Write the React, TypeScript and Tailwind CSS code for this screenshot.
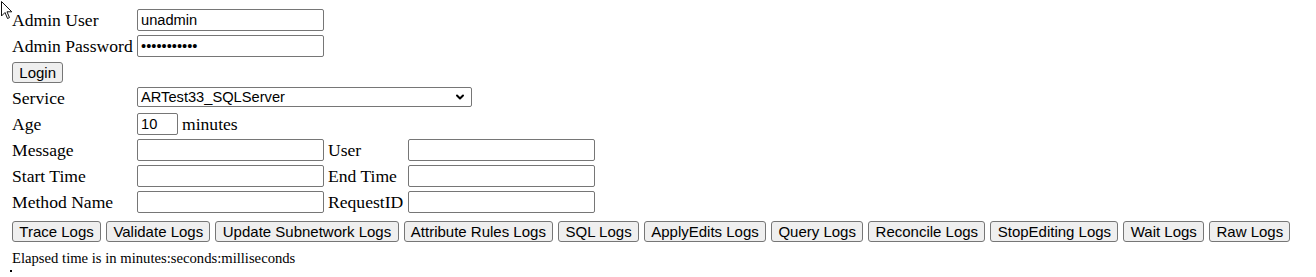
import { ChevronDown } from 'lucide-react'

const serif = "font-['Liberation_Serif','Times_New_Roman',serif]"
const sans = "font-['Liberation_Sans',Arial,sans-serif]"

const logButtons = [
  'Trace Logs',
  'Validate Logs',
  'Update Subnetwork Logs',
  'Attribute Rules Logs',
  'SQL Logs',
  'ApplyEdits Logs',
  'Query Logs',
  'Reconcile Logs',
  'StopEditing Logs',
  'Wait Logs',
  'Raw Logs',
]

function TextBox({ value = '', type = 'text', className = 'w-[187px]' }: { value?: string; type?: string; className?: string }) {
  return (
    <input
      type={type}
      defaultValue={value}
      className={`${sans} ${className} h-[22px] shrink-0 rounded-[2px] border border-[#767676] bg-white px-[3px] text-[14.67px] text-black outline-none`}
    />
  )
}

function Btn({ children }: { children: string }) {
  return (
    <button
      className={`${sans} h-[21px] shrink-0 rounded-[3px] border border-[#767676] bg-[#efefef] px-[6.3px] text-[15px] leading-none text-black whitespace-nowrap`}
    >
      {children}
    </button>
  )
}

function Label({ children, className = 'w-[125px]' }: { children: string; className?: string }) {
  return <span className={`${className} shrink-0 whitespace-nowrap`}>{children}</span>
}

function Row({ children }: { children: React.ReactNode }) {
  return <div className="flex h-[26px] items-center">{children}</div>
}

function Cursor() {
  return (
    <svg className="absolute left-0 top-0" width="14" height="20" viewBox="0 0 14 20">
      <path d="M1.5 1.5 L1.5 16 L5 12.5 L7.5 18.5 L9.5 17.6 L7 11.8 L11.8 11.8 Z" fill="white" stroke="#111" strokeWidth="1" strokeLinejoin="round" />
    </svg>
  )
}

export default function App() {
  return (
    <div className={`${serif} relative min-h-[277px] w-[1316px] bg-white pl-[12px] pt-[7px] text-[17.6px] text-black`}>
      <Cursor />
      <Row>
        <Label>Admin User</Label>
        <TextBox value="unadmin" />
      </Row>
      <Row>
        <Label>Admin Password</Label>
        <TextBox value="adminpasswd" type="password" />
      </Row>
      <Row>
        <Btn>Login</Btn>
      </Row>
      <Row>
        <Label>Service</Label>
        <div className="relative flex h-[20px] w-[335px] -translate-y-[1px]">
          <select
            defaultValue="ARTest33_SQLServer"
            className={`${sans} h-[20px] w-full appearance-none rounded-[2px] border border-[#767676] bg-white pl-[3px] text-[14.67px] leading-[17px] text-black outline-none`}
          >
            <option>ARTest33_SQLServer</option>
          </select>
          <ChevronDown size={12} strokeWidth={4} className="pointer-events-none absolute right-[6px] top-[4px] text-black" />
        </div>
      </Row>
      <Row>
        <Label>Age</Label>
        <TextBox value="10" className="w-[41px]" />
        <span className="ml-[4px]">minutes</span>
      </Row>
      <Row>
        <Label>Message</Label>
        <TextBox />
        <Label className="ml-[4px] w-[80px]">User</Label>
        <TextBox />
      </Row>
      <Row>
        <Label>Start Time</Label>
        <TextBox />
        <Label className="ml-[4px] w-[80px]">End Time</Label>
        <TextBox />
      </Row>
      <Row>
        <Label>Method Name</Label>
        <TextBox />
        <Label className="ml-[4px] w-[80px]">RequestID</Label>
        <TextBox />
      </Row>
      <div className="mt-[3px] flex h-[26px] items-center gap-[5px]">
        {logButtons.map((b) => (
          <Btn key={b}>{b}</Btn>
        ))}
      </div>
      <p className="mt-[6px] text-[14.67px] leading-[17px]">Elapsed time is in minutes:seconds:milliseconds</p>
      <div className="-ml-[2px] mt-[3px] h-[2px] w-[2px] bg-black" />
    </div>
  )
}
